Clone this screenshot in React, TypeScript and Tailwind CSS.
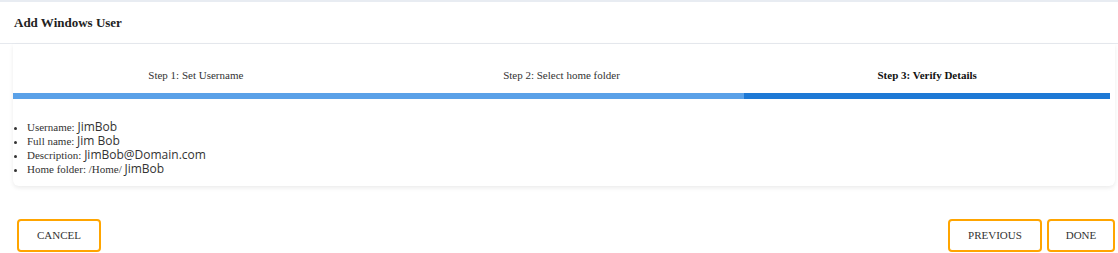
import React from "react";

const serif = { fontFamily: '"Liberation Serif", "Times New Roman", serif' };

export default function App() {
  const steps = ["Step 1: Set Username", "Step 2: Select home folder", "Step 3: Verify Details"];
  const items: [string, string][] = [
    ["Username: ", "JimBob"],
    ["Full name: ", "Jim Bob"],
    ["Description: ", "JimBob@Domain.com"],
    ["Home folder: /Home/ ", "JimBob"],
  ];
  return (
    <div className="w-[1118px] h-[253px] bg-white text-[#333]" style={serif}>
      <div className="border-t-2 border-[#e8ecf2]">
        <div className="h-[42px] flex items-center px-[14px] border-b border-[#e6e9ee]">
          <span className="text-[13px] font-bold text-[#222]">Add Windows User</span>
        </div>
        <div className="px-[13px]">
          <div className="rounded-b-[6px] shadow-[0_2px_4px_rgba(0,0,0,0.08)] pr-[5px] pb-[10px] -mr-[10px]">
            <div className="grid grid-cols-3 pt-[24px] h-[48px]">
              {steps.map((s, i) => (
                <div
                  key={s}
                  className={`text-center text-[11px] leading-[14px] ${i === 2 ? "font-bold text-[#111]" : "text-[#333]"}`}
                >
                  {s}
                </div>
              ))}
            </div>
            <div className="flex h-[6px] mt-[1px]">
              <div className="w-2/3 bg-[#5aa1e8]" />
              <div className="w-1/3 bg-[#1e79d5]" />
            </div>
            <ul className="list-disc pl-[14px] mt-[21px] text-[11px] text-[#333]">
              {items.map(([label, val]) => (
                <li key={label} className="h-[14px] leading-[14px]">
                  {label}
                  <span className="text-[12px] leading-[14px]" style={{ fontFamily: '"Open Sans", sans-serif' }}>
                    {val}
                  </span>
                </li>
              ))}
            </ul>
          </div>
        </div>
        <div className="flex justify-between items-center pl-[17px] mt-[33px] pr-[3px]">
          <button className="h-[33px] w-[84px] border-2 border-[#ffa500] rounded-[4px] text-[11px] text-[#333] bg-white">
            CANCEL
          </button>
          <div className="flex gap-[5px]">
            <button className="h-[33px] w-[94px] border-2 border-[#ffa500] rounded-[4px] text-[11px] text-[#333] bg-white">
              PREVIOUS
            </button>
            <button className="h-[33px] w-[68px] border-2 border-[#ffa500] rounded-[4px] text-[11px] text-[#333] bg-white">
              DONE
            </button>
          </div>
        </div>
      </div>
    </div>
  );
}
